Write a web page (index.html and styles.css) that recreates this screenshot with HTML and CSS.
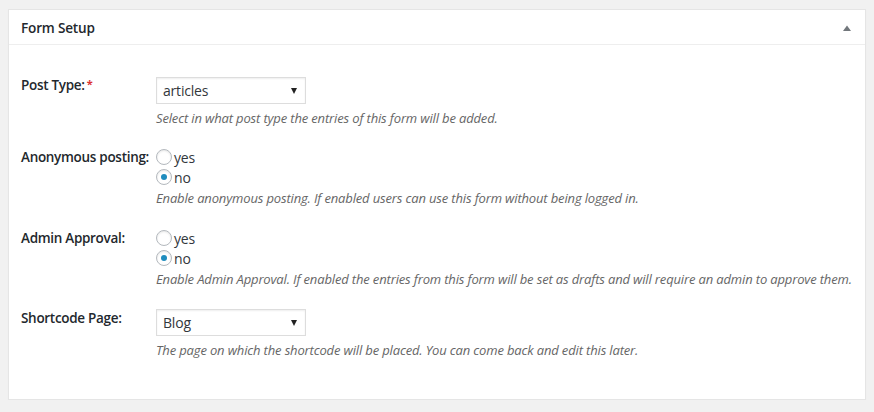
FILE: index.html
```html
<!DOCTYPE html>
<html lang="en">
<head>
<meta charset="utf-8">
<title>Form Setup</title>
<link rel="stylesheet" href="styles.css">
</head>
<body>
<div class="postbox">
  <div class="hndle">
    <h2 class="hndle-title">Form Setup</h2>
    <button class="toggle" aria-label="Toggle panel">
      <svg width="8" height="6" viewBox="0 0 8 6"><path d="M0 6 L4 0.5 L8 6 Z" fill="#72777c"/></svg>
    </button>
  </div>
  <div class="inside">
    <div class="row row-select-first">
      <label class="row-label lbl-first">Post Type:<span class="req">*</span></label>
      <div class="field">
        <div class="select-wrap">
          <select class="select"><option>articles</option></select>
        </div>
        <p class="desc desc-select">Select in what post type the entries of this form will be added.</p>
      </div>
    </div>
    <div class="row">
      <label class="row-label">Anonymous posting:</label>
      <div class="field">
        <label class="radio-line"><span class="radio"></span>yes</label>
        <label class="radio-line"><span class="radio checked"></span>no</label>
        <p class="desc desc-radio">Enable anonymous posting. If enabled users can use this form without being logged in.</p>
      </div>
    </div>
    <div class="row">
      <label class="row-label">Admin Approval:</label>
      <div class="field">
        <label class="radio-line"><span class="radio"></span>yes</label>
        <label class="radio-line"><span class="radio checked"></span>no</label>
        <p class="desc desc-radio">Enable Admin Approval. If enabled the entries from this form will be set as drafts and will require an admin to approve them.</p>
      </div>
    </div>
    <div class="row row-last">
      <label class="row-label lbl-last">Shortcode Page:</label>
      <div class="field">
        <div class="select-wrap">
          <select class="select"><option>Blog</option></select>
        </div>
        <p class="desc desc-select">The page on which the shortcode will be placed. You can come back and edit this later.</p>
      </div>
    </div>
  </div>
</div>
</body>
</html>
```
FILE: styles.css
```css
* { box-sizing: border-box; }
html, body { margin: 0; padding: 0; }
body {
  background: #f1f1f1;
  padding: 9px 8px 0 8px;
  font-family: "Open Sans", "Noto Sans", sans-serif;
  color: #23282d;
  font-size: 13px;
}
.postbox {
  width: 858px;
  background: #fff;
  border: 1px solid #e5e5e5;
  box-shadow: 0 1px 1px rgba(0,0,0,.04);
}
.hndle {
  height: 35px;
  border-bottom: 1px solid #eee;
  display: flex;
  align-items: center;
  justify-content: space-between;
  padding: 2px 14px 0 12px;
}
.hndle-title {
  margin: 0;
  font-size: 13.6px;
  font-weight: 600;
  line-height: 20px;
  color: #23282d;
  letter-spacing: -0.2px;
}
.toggle {
  border: 0;
  background: none;
  padding: 0;
  width: 8px;
  height: 6px;
  display: flex;
  margin-top: -1px;
}
.inside {
  padding: 32px 12px 40px 12px;
}
.row {
  display: grid;
  grid-template-columns: 135px 1fr;
  margin-bottom: 20px;
}
.row + .row { margin-bottom: 21px; }
.row.row-last { margin-bottom: 0; }
.row-label {
  font-size: 13.5px;
  font-weight: 600;
  line-height: 20px;
  color: #23282d;
  letter-spacing: -0.3px;
}
.lbl-first { margin-top: -2px; }
.lbl-last { margin-top: -1px; }
.req {
  color: #dc3232;
  font-size: 11px;
  font-weight: 700;
  vertical-align: top;
  position: relative;
  top: -1px;
  margin-left: 2px;
}
.field { display: flex; flex-direction: column; align-items: flex-start; }
.select-wrap {
  position: relative;
  width: 150px;
  height: 27px;
}
.select-wrap::after {
  content: "";
  position: absolute;
  right: 9px;
  top: 11px;
  border-left: 3px solid transparent;
  border-right: 3px solid transparent;
  border-top: 6px solid #222;
  pointer-events: none;
}
.select {
  -webkit-appearance: none;
  appearance: none;
  width: 150px;
  height: 27px;
  margin: 0;
  border: 1px solid #ddd;
  border-radius: 0;
  background: #fff;
  box-shadow: inset 0 1px 2px rgba(0,0,0,.07);
  padding: 0 20px 0 6px;
  font-family: "Open Sans", "Noto Sans", sans-serif;
  font-size: 14px;
  color: #32373c;
  line-height: 25px;
  letter-spacing: -0.2px;
}
.radio-line {
  display: flex;
  align-items: center;
  height: 20px;
  font-size: 14px;
  color: #32373c;
  letter-spacing: -0.2px;
}
.radio {
  width: 16px;
  height: 16px;
  border: 1px solid #b4b9be;
  border-radius: 50%;
  background: #fff;
  box-shadow: inset 0 1px 2px rgba(0,0,0,.1);
  margin-right: 2px;
  display: flex;
  align-items: center;
  justify-content: center;
}
.radio.checked::before {
  content: "";
  width: 6px;
  height: 6px;
  border-radius: 50%;
  background: #1e8cbe;
}
.desc {
  margin: 0;
  font-size: 13px;
  font-style: italic;
  line-height: 18px;
  color: #666;
  letter-spacing: -0.15px;
}
.desc-select { margin-top: 5px; }
.desc-radio { margin-top: 2px; }
```
